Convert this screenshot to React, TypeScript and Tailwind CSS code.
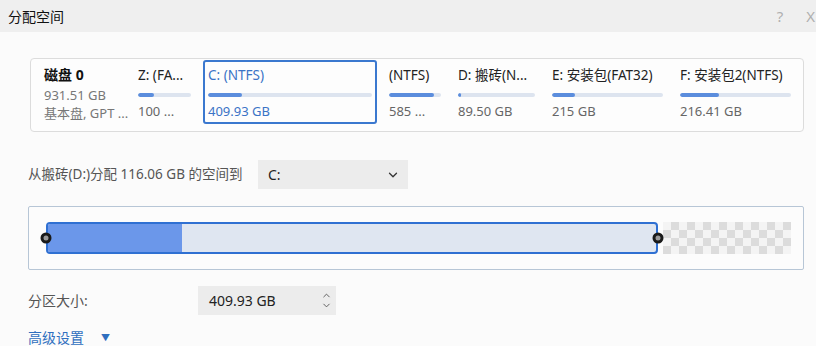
import { ChevronDown, ChevronUp } from "lucide-react";

const font = { fontFamily: '"Noto Sans", "Noto Sans CJK SC", sans-serif' };

type Part = { label: string; size: string; width: number; used: number; selected?: boolean };

const parts: Part[] = [
  { label: "Z: (FA...", size: "100 ...", width: 53, used: 30 },
  { label: "C: (NTFS)", size: "409.93 GB", width: 164, used: 21, selected: true },
  { label: "(NTFS)", size: "585 ...", width: 52, used: 87 },
  { label: "D: 搬砖(N...", size: "89.50 GB", width: 77, used: 4 },
  { label: "E: 安装包(FAT32)", size: "215 GB", width: 111, used: 21 },
  { label: "F: 安装包2(NTFS)", size: "216.41 GB", width: 111, used: 35 },
];

function PartItem({ p }: { p: Part }) {
  return (
    <div
      className={`shrink-0 rounded-[3px] border-2 px-[3px] pt-[3px] pb-[1px] ${
        p.selected ? "border-[#3b78cf]" : "border-transparent"
      }`}
    >
      <div style={{ width: p.width }}>
        <div
          className={`h-5 whitespace-nowrap text-[13.5px] leading-5 ${
            p.selected ? "text-[#3a73c6]" : "text-[#222]"
          }`}
        >
          {p.label}
        </div>
        <div className="mt-2 h-1 overflow-hidden rounded-full bg-[#dde4ef]">
          <div className="h-full rounded-full bg-[#5b8ddd]" style={{ width: `${p.used}%` }} />
        </div>
        <div
          className={`mt-1 h-5 whitespace-nowrap text-[13px] leading-5 ${
            p.selected ? "text-[#3a73c6]" : "text-[#666]"
          }`}
        >
          {p.size}
        </div>
      </div>
    </div>
  );
}

function Handle() {
  return (
    <div className="absolute top-1/2 h-[11px] w-[11px] -translate-x-1/2 -translate-y-1/2 rounded-full border-[3px] border-[#1a1a1a] bg-[#9a9a9a]" />
  );
}

export default function App() {
  return (
    <div className="h-[346px] w-[816px] overflow-hidden bg-[#fbfbfb]" style={font}>
      <div className="flex h-8 items-center justify-between bg-[#efefef] pl-2 pr-[1px]">
        <span className="text-[14px] text-[#111]">分配空间</span>
        <div className="flex items-center gap-[23px] text-[15px] text-[#b0b0b0]">
          <span>?</span>
          <span className="text-[15px]">X</span>
        </div>
      </div>

      <div className="pl-[28px] pr-[12px]">
        <div className="ml-[2px] mt-[26px] flex h-[74px] items-start rounded-[4px] border border-[#dcdcdc] bg-[#fdfdfd] pl-[13px] pt-[1px]">
          <div className="w-[89px] shrink-0 pt-[5px]">
            <div className="h-5 text-[14px] font-bold leading-5 text-[#111]">磁盘 0</div>
            <div className="mt-[1px] h-[18px] text-[13px] leading-[18px] text-[#777]">931.51 GB</div>
            <div className="h-[19px] whitespace-nowrap text-[13px] leading-[19px] text-[#777]">基本盘, GPT ...</div>
          </div>
          <div className="flex gap-[7px]">
            {parts.map((p) => (
              <PartItem key={p.label} p={p} />
            ))}
          </div>
        </div>

        <div className="mt-[28px] flex items-center">
          <span className="w-[230px] text-[13.5px] text-[#555]">从搬砖(D:)分配 116.06 GB 的空间到</span>
          <div className="flex h-[29px] w-[150px] items-center justify-between bg-[#ececec] pl-[10px] pr-[8px] text-[14px] text-[#222]">
            <span>C:</span>
            <ChevronDown size={14} strokeWidth={2.2} className="text-[#333]" />
          </div>
        </div>

        <div className="mt-[17px] flex h-[64px] items-center gap-[5px] rounded-[2px] border border-[#b7c6d6] bg-[#fcfcfc] pl-[17px] pr-[12px]">
          <div className="relative h-[32px] w-[612px] shrink-0">
            <div className="flex h-full overflow-hidden rounded-[4px] border-2 border-[#2f70d2] bg-[#dfe6f1]">
              <div className="h-full w-[134px] bg-[#6b97ea]" />
            </div>
            <div className="absolute inset-y-0 left-0">
              <Handle />
            </div>
            <div className="absolute inset-y-0 right-0">
              <Handle />
            </div>
          </div>
          <div className="h-[32px] flex-1 bg-[repeating-conic-gradient(#dcdcdc_0%_25%,#f4f4f4_0%_50%)] bg-[length:16px_16px]" />
        </div>

        <div className="mt-[16px] flex items-center">
          <span className="w-[170px] text-[14px] text-[#555]">分区大小:</span>
          <div className="flex h-[29px] w-[138px] items-center justify-between bg-[#ececec] pl-[11px] pr-[4px] text-[14px] text-[#222]">
            <span>409.93 GB</span>
            <div className="flex flex-col items-center text-[#555]">
              <ChevronUp size={11} strokeWidth={2} className="-mb-[1px]" />
              <ChevronDown size={11} strokeWidth={2} />
            </div>
          </div>
        </div>

        <div className="mt-[12px] flex items-center gap-[17px] text-[14px] text-[#2f6fbf]">
          <span>高级设置</span>
          <span className="text-[9px]">▼</span>
        </div>
      </div>
    </div>
  );
}
